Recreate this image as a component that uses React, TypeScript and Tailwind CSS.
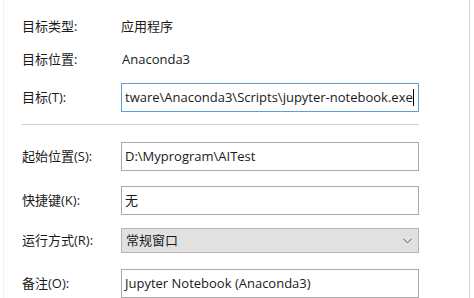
import React from "react";

const font = { fontFamily: '"Open Sans", "Noto Sans CJK SC", sans-serif' };

function Label({ children }: { children: React.ReactNode }) {
  return <div className="w-[99px] shrink-0 text-[13px] text-[#1a1a1a]">{children}</div>;
}

export default function App() {
  return (
    <div className="w-[474px] h-[298px] overflow-hidden bg-white" style={font}>
      <div className="ml-[3px] w-[467px] h-[298px] border-l border-[#efefef] border-r border-r-[#d9d9d9] pl-[18px] flex flex-col">
        <div className="mt-[16px] h-[24px] flex items-center">
          <Label>目标类型:</Label>
          <div className="text-[13px] text-[#1a1a1a]">应用程序</div>
        </div>
        <div className="mt-[11px] h-[24px] flex items-center">
          <Label>目标位置:</Label>
          <div className="text-[13px] text-[#1a1a1a] pl-px">Anaconda3</div>
        </div>
        <div className="mt-[12px] h-[29px] flex items-center">
          <Label>目标(T):</Label>
          <div className="w-[298px] h-[29px] border border-[#5a9fd8] flex items-center pl-[3px] overflow-hidden whitespace-nowrap text-[13px] text-[#1a1a1a]">
            <span>tware\Anaconda3\Scripts\jupyter-notebook.exe</span>
            <span className="inline-block w-px h-[17px] bg-black" />
          </div>
        </div>
        <div className="mt-[12px] w-[397px] h-px bg-[#cfcfcf]" />
        <div className="mt-[17px] h-[29px] flex items-center">
          <Label>起始位置(S):</Label>
          <div className="w-[298px] h-[29px] border border-[#a9a9a9] flex items-center pl-[3px] text-[13px] text-[#1a1a1a]">
            D:\Myprogram\AITest
          </div>
        </div>
        <div className="mt-[15px] h-[29px] flex items-center">
          <Label>快捷键(K):</Label>
          <div className="w-[298px] h-[29px] border border-[#a9a9a9] flex items-center pl-[3px] text-[13px] text-[#1a1a1a]">
            无
          </div>
        </div>
        <div className="mt-[13px] h-[25px] flex items-center">
          <Label>运行方式(R):</Label>
          <div className="w-[298px] h-[25px] border border-[#b5b5b5] bg-[#e1e1e1] flex items-center justify-between pl-[4px] pr-[6px] text-[13px] text-[#1a1a1a]">
            <span>常规窗口</span>
            <svg width="9" height="6" viewBox="0 0 9 6" fill="none">
              <path d="M0.5 0.8 L4.5 4.8 L8.5 0.8" stroke="#555" strokeWidth="1" />
            </svg>
          </div>
        </div>
        <div className="mt-[16px] h-[29px] flex items-start">
          <div className="w-[99px] shrink-0 text-[13px] text-[#1a1a1a] mt-[5px]">备注(O):</div>
          <div className="w-[298px] h-[29px] border border-[#a9a9a9] flex items-center pl-[3px] text-[13px] text-[#1a1a1a]">
            Jupyter Notebook (Anaconda3)
          </div>
        </div>
      </div>
    </div>
  );
}
